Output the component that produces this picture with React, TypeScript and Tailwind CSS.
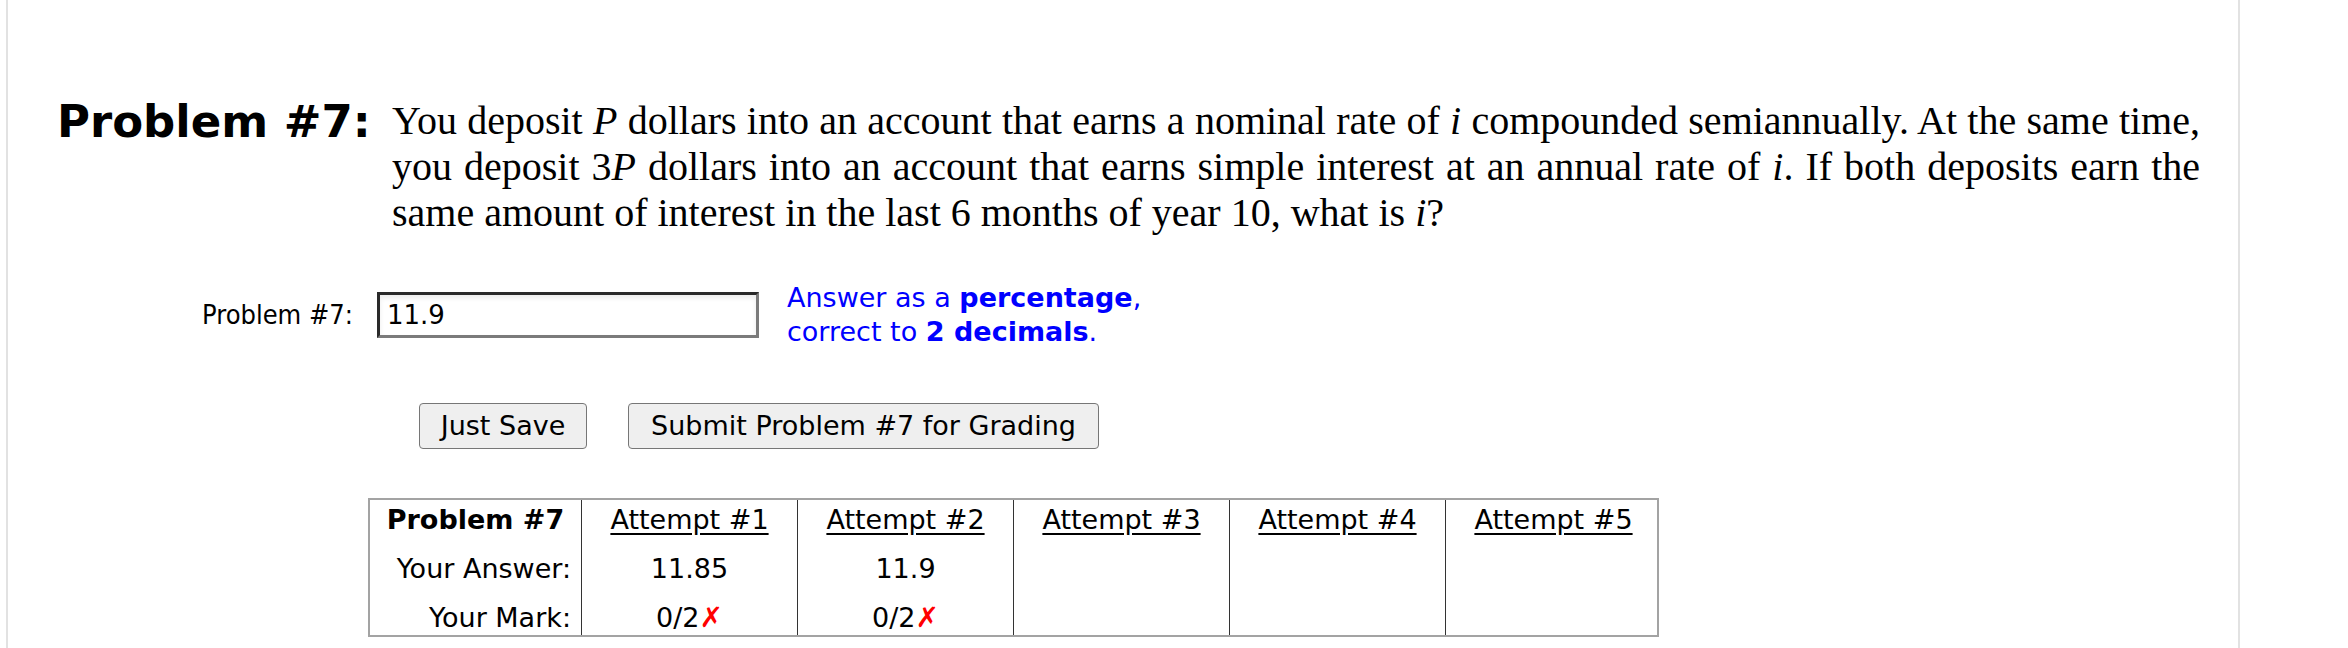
import React from "react";

const attempts = [
  { label: "Attempt #1", answer: "11.85", mark: "0/2", wrong: true },
  { label: "Attempt #2", answer: "11.9", mark: "0/2", wrong: true },
  { label: "Attempt #3", answer: "", mark: "", wrong: false },
  { label: "Attempt #4", answer: "", mark: "", wrong: false },
  { label: "Attempt #5", answer: "", mark: "", wrong: false },
];

const sans = "font-['DejaVu_Sans',Verdana,sans-serif]";

function AttemptsTable() {
  return (
    <div
      className={`ml-[360px] grid w-[1291px] grid-cols-[211px_repeat(5,216px)] border-2 border-[#a3a3a3] text-[27px] leading-normal text-black ${sans}`}
    >
      {/* header row */}
      <div className="h-[38px] text-center font-bold">Problem #7</div>
      {attempts.map((a) => (
        <div key={a.label} className="h-[38px] border-l border-[#333] text-center">
          <span className="underline underline-offset-[4px]">{a.label}</span>
        </div>
      ))}

      {/* answers */}
      <div className="h-[49px] pr-[10px] pt-[11px] text-right">Your Answer:</div>
      {attempts.map((a) => (
        <div
          key={a.label + "-ans"}
          className="h-[49px] border-l border-[#333] pt-[11px] text-center"
        >
          {a.answer}
        </div>
      ))}

      {/* marks */}
      <div className="h-[48px] pr-[10px] pt-[11px] text-right">Your Mark:</div>
      {attempts.map((a) => (
        <div
          key={a.label + "-mark"}
          className="h-[48px] border-l border-[#333] pt-[11px] text-center"
        >
          {a.mark}
          {a.wrong && (
            <span className="text-[28px] font-bold leading-none text-[#ff0000]">✗</span>
          )}
        </div>
      ))}
    </div>
  );
}

export default function App() {
  return (
    <div className="min-h-[648px] bg-white">
      <div className="ml-[6px] min-h-[648px] w-[2234px] border-x-2 border-[#e2e2e2] pt-[88px]">
        {/* question */}
        <div className="flex pl-[49px]">
          <div
            className={`w-[335px] shrink-0 text-[45px] font-bold leading-normal text-black ${sans}`}
          >
            Problem #7:
          </div>
          <p className="mt-[10px] w-[1808px] text-justify font-['Liberation_Serif','Times_New_Roman',serif] text-[40px] leading-[46px] text-black">
            You deposit <i>P</i> dollars into an account that earns a nominal
            rate of <i>i</i> compounded semiannually. At the same time, you
            deposit 3<i>P</i> dollars into an account that earns simple
            interest at an annual rate of <i>i</i>. If both deposits earn the
            same amount of interest in the last 6 months of year 10, what is{" "}
            <i>i</i>?
          </p>
        </div>

        {/* answer input */}
        <div className="mt-[45px] flex items-center">
          <label className="w-[345px] shrink-0 text-right font-['DejaVu_Sans_Condensed','DejaVu_Sans',sans-serif] text-[27px] leading-normal text-black">
            Problem #7:
          </label>
          <input
            type="text"
            defaultValue="11.9"
            className={`ml-[24px] h-[46px] w-[382px] border-[3px] border-t-[#2a2a2a] border-l-[#2a2a2a] border-b-[#7b7b7b] border-r-[#7b7b7b] bg-white pl-[7px] text-[26px] text-black shadow-[inset_0_3px_5px_rgba(0,0,0,0.08)] outline-none ${sans}`}
          />
          <div className={`ml-[28px] text-[27px] leading-[34px] text-[#0000ff] ${sans}`}>
            Answer as a <b>percentage</b>,
            <br />
            correct to <b>2 decimals</b>.
          </div>
        </div>

        {/* buttons */}
        <div className={`ml-[411px] mt-[54px] flex gap-[41px] ${sans}`}>
          <button
            type="button"
            className="h-[46px] w-[168px] rounded-[4px] border-[1.5px] border-[#767676] bg-[#efefef] text-[27px] text-black"
          >
            Just Save
          </button>
          <button
            type="button"
            className="h-[46px] w-[471px] rounded-[4px] border-[1.5px] border-[#767676] bg-[#efefef] text-[27px] text-black"
          >
            Submit Problem #7 for Grading
          </button>
        </div>

        <div className="mt-[49px]">
          <AttemptsTable />
        </div>
      </div>
    </div>
  );
}
